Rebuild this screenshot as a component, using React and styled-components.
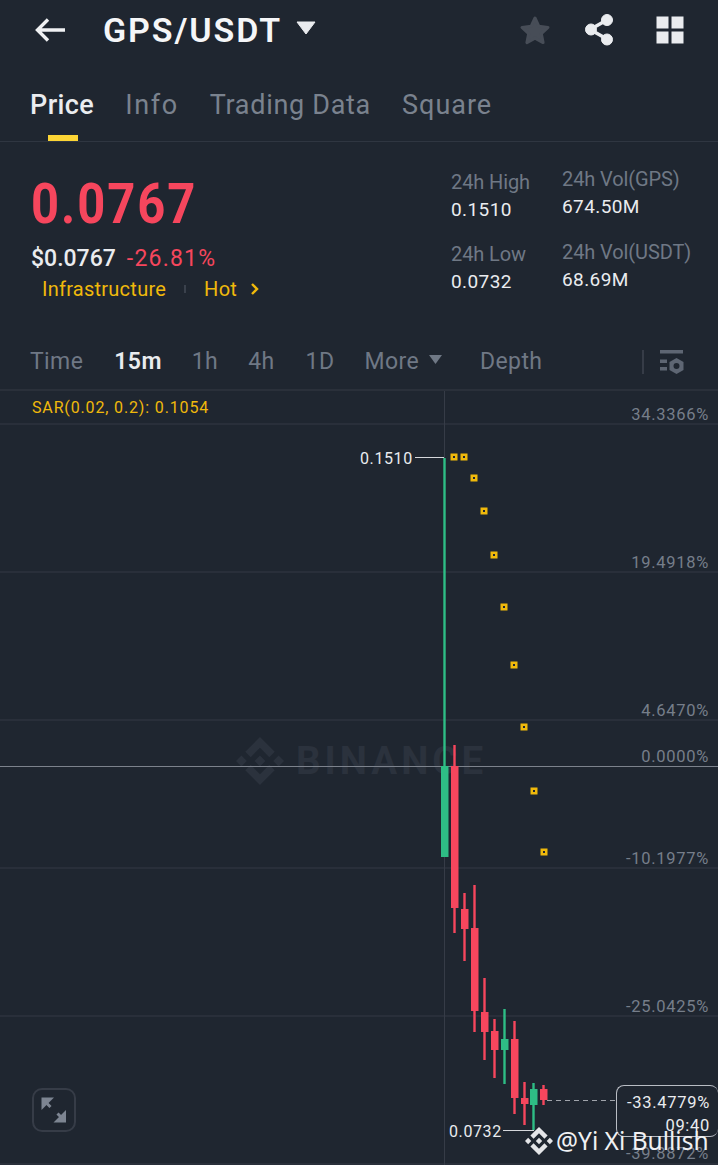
import React from 'react';
import styled, { createGlobalStyle } from 'styled-components';

const GlobalStyle = createGlobalStyle`
  html, body {
    margin: 0;
    padding: 0;
    background: #1f2630;
  }
`;

const Page = styled.div`
  width: 718px;
  height: 1165px;
  overflow: hidden;
  background: #1f2630;
  font-family: Roboto, "Noto Sans", sans-serif;
  color: #eaecef;
`;

const Header = styled.header`
  display: flex;
  align-items: center;
  height: 60px;
  padding: 0 34px 0 35px;
`;

const Title = styled.h1`
  margin: 0 0 0 38px;
  font-size: 34px;
  font-weight: 600;
  letter-spacing: 1.9px;
  color: #f5f6f8;
`;

const TitleCaret = styled.svg`
  width: 20px;
  height: 14px;
  margin: 0 0 4px 14px;
`;

const HeaderIcons = styled.div`
  display: flex;
  align-items: center;
  gap: 33px;
  margin-left: auto;
`;

const GridIcon = styled.svg`
  margin-left: 9px;
`;

const Tabs = styled.nav`
  display: flex;
  gap: 31px;
  height: 81px;
  padding-left: 30px;
  border-bottom: 1px solid #2f3641;
`;

const Tab = styled.div`
  position: relative;
  padding-top: 27px;
  font-size: 27px;
  line-height: 36px;
  letter-spacing: ${p => p.$track}px;
  font-weight: ${p => (p.$active ? 500 : 400)};
  color: ${p => (p.$active ? '#eaecef' : '#7a828e')};

  &::after {
    content: '';
    display: ${p => (p.$active ? 'block' : 'none')};
    position: absolute;
    left: 18px;
    bottom: 0;
    width: 30px;
    height: 6px;
    background: #fcd535;
  }
`;

const Stats = styled.section`
  display: flex;
  justify-content: space-between;
  height: 193px;
  padding: 0 28px 0 31px;
`;

const PriceBlock = styled.div`
  display: flex;
  flex-direction: column;
`;

const BigPrice = styled.div`
  margin-top: 30px;
  font-size: 55px;
  line-height: 64px;
  font-weight: 700;
  letter-spacing: 2.2px;
  color: #f6465d;
  transform: scaleX(0.89);
  transform-origin: left center;
`;

const PriceRow = styled.div`
  display: flex;
  gap: 11px;
  margin-top: 8px;
  font-size: 23px;
  line-height: 30px;
`;

const Fiat = styled.span`
  font-weight: 500;
`;

const Change = styled.span`
  letter-spacing: 1.2px;
  color: #f6465d;
`;

const TagRow = styled.div`
  display: flex;
  align-items: center;
  margin: 1px 0 0 11px;
  font-size: 20px;
  line-height: 28px;
  letter-spacing: 0.25px;
  color: #f0b90b;
`;

const TagDivider = styled.i`
  width: 2px;
  height: 8px;
  margin: 0 18px;
  background: #3a414c;
`;

const Chevron = styled.svg`
  width: 10px;
  height: 14px;
  margin-left: 13px;
`;

const StatColumns = styled.div`
  display: flex;
  gap: 32px;
`;

const StatColumn = styled.div`
  display: flex;
  flex-direction: column;
  width: ${p => p.$w}px;
  padding-top: ${p => p.$top}px;
  white-space: nowrap;
`;

const StatItem = styled.div`
  height: ${p => p.$h}px;
`;

const StatLabel = styled.div`
  font-size: 20px;
  line-height: 28px;
  letter-spacing: -0.1px;
  color: #6f7885;
`;

const StatValue = styled.div`
  font-size: 19px;
  line-height: 28px;
  letter-spacing: 0.4px;
  color: #eaecef;
`;

const Intervals = styled.div`
  display: flex;
  align-items: center;
  height: 53px;
  padding: 0 34px 1px 30px;
  border-bottom: 2px solid #2a303a;
  font-size: 23px;
  letter-spacing: 0.4px;
`;

const Interval = styled.span`
  margin-right: ${p => p.$gap}px;
  font-weight: ${p => (p.$active ? 600 : 400)};
  color: ${p => (p.$active ? '#eaecef' : '#6f7885')};
`;

const MoreCaret = styled.svg`
  width: 13px;
  height: 9px;
  margin: 0 38px 4px -21px;
`;

const ToolGroup = styled.div`
  display: flex;
  align-items: center;
  gap: 16px;
  margin-left: auto;
`;

const ToolDivider = styled.i`
  width: 2px;
  height: 24px;
  background: #363c47;
`;

const Chart = styled.div`
  position: relative;
  height: 774px;
  overflow: hidden;
`;

const ChartCanvas = styled.svg`
  display: block;
  position: absolute;
  left: 0;
  top: 0;
`;

const IndicatorLabel = styled.div`
  position: absolute;
  left: 32px;
  top: 6px;
  font-size: 16px;
  line-height: 22px;
  letter-spacing: 0.85px;
  color: #f0b90b;
`;

const Watermark = styled.div`
  position: absolute;
  left: 296px;
  top: 346px;
  font-size: 38.500px;
  line-height: 48px;
  font-weight: 700;
  letter-spacing: 4px;
  color: #2b323d;
`;

const AxisLabel = styled.div`
  position: absolute;
  right: 9px;
  top: ${p => p.$y - 391 - 10}px;
  font-size: 16.500px;
  line-height: 22px;
  letter-spacing: 0.7px;
  color: #767e8a;
`;

const ExtremeLabel = styled.div`
  position: absolute;
  left: ${p => p.$x}px;
  top: ${p => p.$y - 391 - 10}px;
  font-size: 16px;
  line-height: 22px;
  letter-spacing: 0.6px;
  color: #eaecef;
`;

const PriceTag = styled.div`
  position: absolute;
  left: 616px;
  top: 694px;
  width: 102px;
  height: 52px;
  box-sizing: border-box;
  padding: 5px 8px 0 0;
  border: 1px solid #b9bdc4;
  border-right-width: 0;
  border-radius: 8px;
  background: #1f2630;
  text-align: right;
  font-size: 16.500px;
  line-height: 23px;
  letter-spacing: 0.7px;
  color: #eaecef;
`;

const ExpandButton = styled.div`
  position: absolute;
  left: 32px;
  top: 697px;
  display: flex;
  align-items: center;
  justify-content: center;
  width: 44px;
  height: 44px;
  box-sizing: border-box;
  border: 2px solid #363c47;
  border-radius: 10px;
`;

const Credit = styled.div`
  position: absolute;
  left: 525px;
  top: 732px;
  display: flex;
  align-items: center;
  gap: 3px;
  font-family: "Noto Sans", sans-serif;
  font-size: 24.500px;
  line-height: 36px;
  white-space: nowrap;
  color: #f0f1f3;
`;

const logoPath =
  'M38.73 53.2l24.59-24.58 24.6 24.6 14.3-14.31L63.32 0 24.42 38.9l14.31 14.3zM0 63.31l14.3-14.31 14.31 14.31-14.31 14.3L0 63.31zm38.73 10.11l24.59 24.59 24.6-24.6 14.31 14.29-38.9 38.91-38.91-38.88-.02-.02 14.33-14.29zm59.4-10.1l14.3-14.31 14.32 14.3-14.31 14.31-14.31-14.3zM77.83 63.3L63.32 48.78 52.59 59.51l-1.24 1.23-2.54 2.54 14.51 14.5 14.51-14.47z';

const GREEN = '#2ebd85';
const RED = '#f6465d';

// x is the left edge of the body, all y are page coordinates
const candles = [
  { x: 441, top: 458, open: 766, close: 857, bottom: 857, color: GREEN },
  { x: 451, top: 745, open: 766, close: 908, bottom: 933, color: RED },
  { x: 461, top: 893, open: 909, close: 929, bottom: 961, color: RED },
  { x: 471, top: 885, open: 928, close: 1011, bottom: 1032, color: RED },
  { x: 481, top: 978, open: 1012, close: 1032, bottom: 1060, color: RED },
  { x: 491, top: 1019, open: 1031, close: 1050, bottom: 1078, color: RED },
  { x: 501, top: 1009, open: 1039, close: 1050, bottom: 1084, color: GREEN },
  { x: 511, top: 1021, open: 1039, close: 1098, bottom: 1114, color: RED },
  { x: 521, top: 1082, open: 1098, close: 1104, bottom: 1125, color: RED },
  { x: 530, top: 1083, open: 1089, close: 1105, bottom: 1130, color: GREEN },
  { x: 540, top: 1085, open: 1089, close: 1100, bottom: 1105, color: RED }
];

const sarDots = [
  [454, 457], [464, 457], [474, 478], [484, 511], [494, 555],
  [504, 607], [514, 665], [524, 727], [534, 791], [544, 852]
];

const gridLines = [424, 572, 720, 868, 1016, 1164];

const axisLabels = [
  { y: 414, text: '34.3366%' },
  { y: 562, text: '19.4918%' },
  { y: 710, text: '4.6470%' },
  { y: 756, text: '0.0000%' },
  { y: 858, text: '-10.1977%' },
  { y: 1006, text: '-25.0425%' },
  { y: 1153, text: '-39.8872%' }
];

const CandleChart = () => (
  <ChartCanvas width="718" height="774" viewBox="0 391 718 774">
    {gridLines.map(y => (
      <rect key={y} x="0" y={y - 1} width="718" height="2" fill="#292f3a" />
    ))}
    <rect x="444" y="391" width="1" height="774" fill="#363c47" />
    <g fill="#2b323d" transform="translate(236 737) scale(0.379)">
      <path d={logoPath} />
    </g>
    <rect x="0" y="766" width="718" height="1" fill="#7c828c" />
    {candles.map(c => (
      <g key={c.x} fill={c.color}>
        <rect x={c.x + 2.3} y={c.top} width="2.400" height={c.bottom - c.top} />
        <rect x={c.x} y={c.open} width="7.500" height={c.close - c.open} />
      </g>
    ))}
    {sarDots.map(([x, y]) => (
      <rect
        key={x}
        x={x - 2.25}
        y={y - 2.25}
        width="4.500"
        height="4.500"
        fill="none"
        stroke="#f0b90b"
        strokeWidth="2.500"
      />
    ))}
    <rect x="415" y="457" width="29" height="1" fill="#d5d7db" />
    <rect x="503" y="1130" width="31" height="1" fill="#d5d7db" />
    <line
      x1="547"
      y1="1100.500"
      x2="616"
      y2="1100.500"
      stroke="#a0a4ab"
      strokeWidth="1"
      strokeDasharray="5 4"
    />
  </ChartCanvas>
);

const App = () => (
  <Page>
    <GlobalStyle />
    <Header>
      <svg width="30" height="24" viewBox="0 0 30 24" fill="none" stroke="#f0f1f3" strokeWidth="3.400">
        <path d="M30 12H3M13 1.500 2.500 12 13 22.500" />
      </svg>
      <Title>GPS/USDT</Title>
      <TitleCaret viewBox="0 0 20 14">
        <path d="M1 1h18l-9 12z" fill="#eaecef" stroke="#eaecef" strokeLinejoin="round" />
      </TitleCaret>
      <HeaderIcons>
        <svg width="32" height="30" viewBox="0 0 32 30">
          <path
            d="M16 3l3.900 8.300 9.100 1.100-6.700 6.200 1.800 9-8.100-4.500-8.100 4.500 1.800-9L3 12.400l9.100-1.100z"
            fill="#474d57"
            stroke="#474d57"
            strokeWidth="3"
            strokeLinejoin="round"
          />
        </svg>
        <svg width="30" height="32" viewBox="0 0 30 32" fill="#eaecef" stroke="#eaecef">
          <path d="M23 6 6 15.500 23 25" fill="none" strokeWidth="3.500" />
          <circle cx="23" cy="6" r="5.500" />
          <circle cx="7" cy="15.500" r="5.500" />
          <circle cx="23" cy="25.500" r="5.500" />
        </svg>
        <GridIcon width="28" height="28" viewBox="0 0 28 28" fill="#eaecef">
          <rect x="0.500" y="0.500" width="12" height="12" />
          <rect x="15.500" y="0.500" width="12" height="12" />
          <rect x="0.500" y="15.500" width="12" height="12" />
          <rect x="15.500" y="15.500" width="12" height="12" />
        </GridIcon>
      </HeaderIcons>
    </Header>

    <Tabs>
      <Tab $active $track={0.4}>Price</Tab>
      <Tab $track={1.6}>Info</Tab>
      <Tab $track={0.7}>Trading Data</Tab>
      <Tab $track={1}>Square</Tab>
    </Tabs>

    <Stats>
      <PriceBlock>
        <BigPrice>0.0767</BigPrice>
        <PriceRow>
          <Fiat>$0.0767</Fiat>
          <Change>-26.81%</Change>
        </PriceRow>
        <TagRow>
          Infrastructure
          <TagDivider />
          Hot
          <Chevron viewBox="0 0 10 14" fill="none" stroke="#f0b90b" strokeWidth="2.400">
            <path d="M2 2l5 5-5 5" />
          </Chevron>
        </TagRow>
      </PriceBlock>
      <StatColumns>
        <StatColumn $w={79} $top={26}>
          <StatItem $h={72}>
            <StatLabel>24h High</StatLabel>
            <StatValue>0.1510</StatValue>
          </StatItem>
          <StatItem $h={72}>
            <StatLabel>24h Low</StatLabel>
            <StatValue>0.0732</StatValue>
          </StatItem>
        </StatColumn>
        <StatColumn $w={128} $top={23}>
          <StatItem $h={73}>
            <StatLabel>24h Vol(GPS)</StatLabel>
            <StatValue>674.50M</StatValue>
          </StatItem>
          <StatItem $h={73}>
            <StatLabel>24h Vol(USDT)</StatLabel>
            <StatValue>68.69M</StatValue>
          </StatItem>
        </StatColumn>
      </StatColumns>
    </Stats>

    <Intervals>
      <Interval $gap={31}>Time</Interval>
      <Interval $gap={30} $active>15m</Interval>
      <Interval $gap={30}>1h</Interval>
      <Interval $gap={31}>4h</Interval>
      <Interval $gap={30}>1D</Interval>
      <Interval $gap={31}>More</Interval>
      <MoreCaret viewBox="0 0 13 9">
        <path d="M0 0h13L6.500 9z" fill="#6f7885" />
      </MoreCaret>
      <Interval $gap={0}>Depth</Interval>
      <ToolGroup>
        <ToolDivider />
        <svg width="24" height="26" viewBox="0 0 24 26" fill="#5e6673">
          <rect x="0" y="1" width="23" height="3.500" />
          <rect x="0" y="10.500" width="7" height="3.500" />
          <rect x="0" y="18" width="7" height="3.500" />
          <path
            fillRule="evenodd"
            d="M16.500 9l7 4v8l-7 4-7-4v-8zM16.500 14a3 3 0 1 0 0 6 3 3 0 0 0 0-6z"
          />
        </svg>
      </ToolGroup>
    </Intervals>

    <Chart>
      <Watermark>BINANCE</Watermark>
      <CandleChart />
      <IndicatorLabel>SAR(0.02, 0.2): 0.1054</IndicatorLabel>
      {axisLabels.map(l => (
        <AxisLabel key={l.y} $y={l.y}>{l.text}</AxisLabel>
      ))}
      <ExtremeLabel $x={360} $y={458}>0.1510</ExtremeLabel>
      <ExtremeLabel $x={449} $y={1131}>0.0732</ExtremeLabel>
      <PriceTag>
        -33.4779%
        <br />
        09:40
      </PriceTag>
      <ExpandButton>
        <svg width="26" height="26" viewBox="0 0 26 26" fill="#7d8592">
          <path d="M0.500 0.500h12.500L0.500 13z" />
          <path d="M25 13v12.500H12.500z" />
          <path d="M6 6.500l3.500 3.500M16.500 16.500l3.500 3.500" stroke="#7d8592" strokeWidth="3" />
        </svg>
      </ExpandButton>
      <Credit>
        <svg width="28" height="28" viewBox="0 0 126.610 126.610" fill="#e4e5e8">
          <path d={logoPath} />
        </svg>
        @Yi Xi Bullish
      </Credit>
    </Chart>
  </Page>
);

export default App;
